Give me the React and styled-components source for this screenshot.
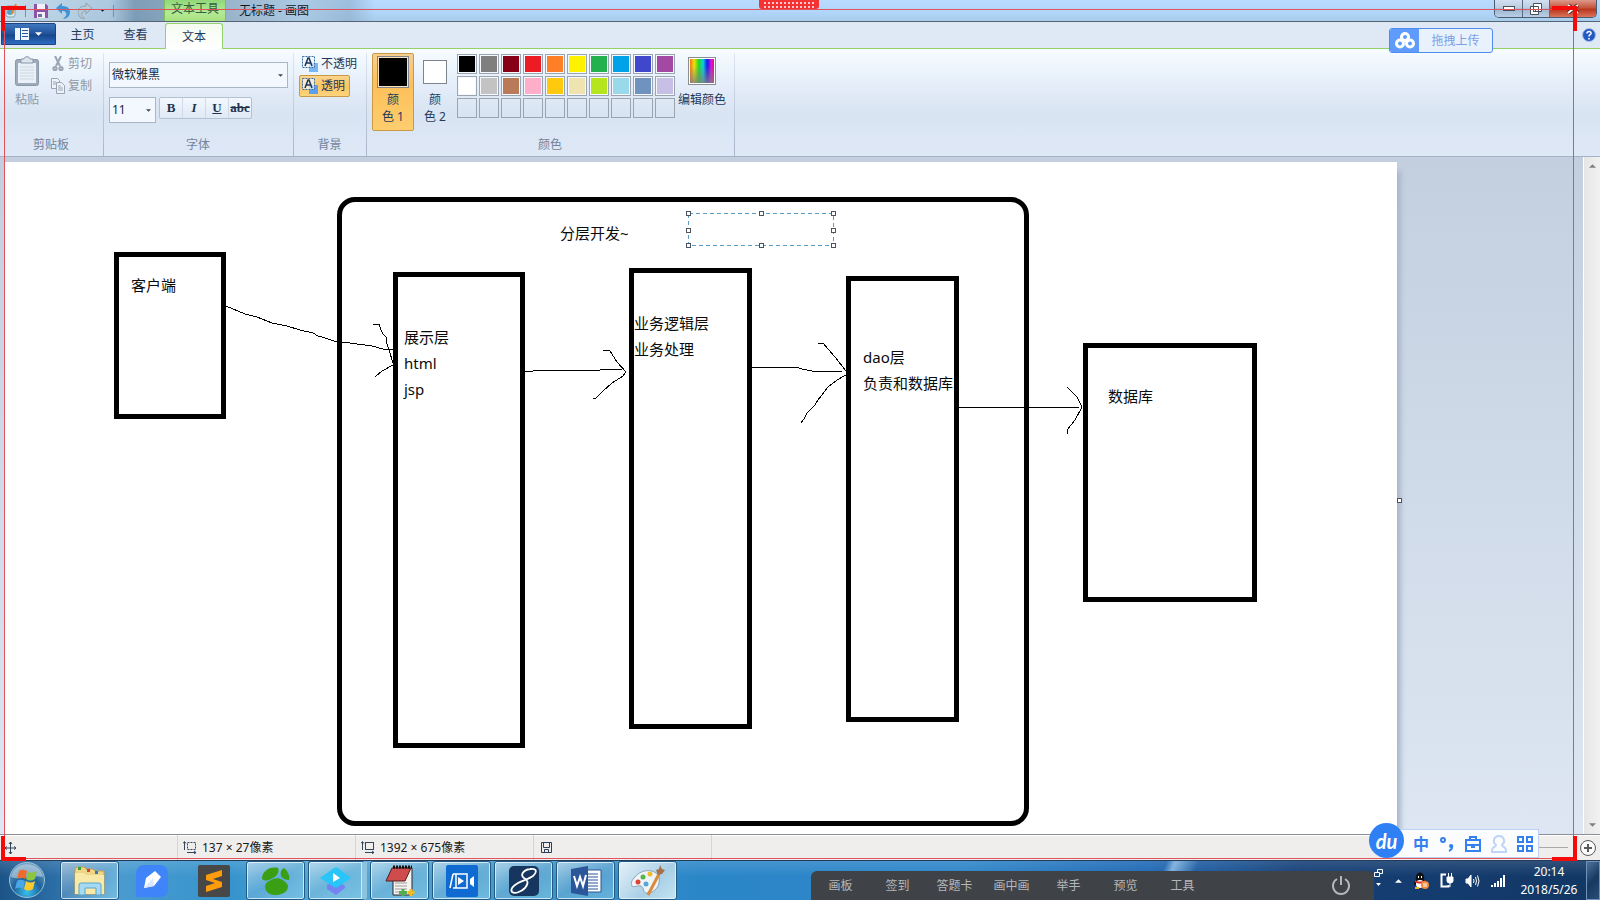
import React from "react";
import styled, { createGlobalStyle, css } from "styled-components";

const GlobalStyle = createGlobalStyle`
  * { box-sizing: border-box; }
  body {
    margin: 0;
    overflow: hidden;
    color: #1e395b;
    font: 12px/18px "Noto Sans", "Noto Sans CJK SC", sans-serif;
  }
  button, select, textarea, input { font: inherit; color: inherit; margin: 0; }
  button { padding: 0; border: 0; background: none; }
  svg { display: block; flex: none; }
`;

const Screen = styled.div`
  position: relative;
  display: flex;
  flex-direction: column;
  height: 100vh;
  overflow: hidden;
`;

/* ---------- title bar ---------- */

const TitleBar = styled.header`
  display: flex;
  flex: none;
  height: 22px;
  border-bottom: 1px solid #566476;
  background:
    linear-gradient(90deg, rgba(200, 220, 232, 0.9) 0, rgba(170, 196, 216, 0.8) 110px, rgba(112, 142, 166, 0.8) 135px, rgba(150, 175, 196, 0.9) 225px, rgba(170, 200, 225, 0.9) 300px, rgba(140, 172, 200, 0.6) 350px, transparent 375px),
    linear-gradient(#b9dbff, #b1d5fa 60%, #a8cde9);
`;

const QuickAccess = styled.div`
  display: flex;
  align-items: center;
  width: 164px;
  padding-left: 5px;
  gap: 8px;
`;

const QuickButton = styled.button`
  display: flex;
`;

const Separator = styled.span`
  width: 1px;
  height: 12px;
  background: #7c8ea3;
`;

const ContextTab = styled.div`
  width: 62px;
  border: solid #7cc05a;
  border-width: 0 1px;
  background: linear-gradient(#8fd877, #b5ea96 60%, #a5e07c);
  color: #35603c;
  text-align: center;
  white-space: nowrap;
`;

const Title = styled.h1`
  flex: 1;
  margin: 0;
  padding: 2px 0 0 13px;
  color: #10161e;
  font-size: 12px;
  font-weight: 400;
`;

const WindowButtons = styled.div`
  display: flex;
  height: 18px;
  margin-right: 3px;
  border: 1px solid #4c5b70;
  border-top: 0;
  border-radius: 0 0 5px 5px;
  overflow: hidden;
`;

const WindowButton = styled.button`
  display: flex;
  align-items: center;
  justify-content: center;
  width: ${(p) => (p.$close ? 47 : 27)}px;
  border-left: ${(p) => (p.$first ? 0 : 1)}px solid #5a6a80;
  background: ${(p) =>
    p.$close
      ? "linear-gradient(#dc9a8c, #c5553e 45%, #b83820 55%, #d9745a)"
      : "linear-gradient(#d2e0f0, #bccde2 45%, #9fb6d2 55%, #b9cee6)"};
`;

/* ---------- tabs ---------- */

const TabRow = styled.nav`
  display: flex;
  flex: none;
  align-items: flex-end;
  height: 27px;
  padding-left: 1px;
  border-bottom: 1px solid #92d269;
  background: #dfe9f5;
`;

const FileButton = styled.button`
  display: flex;
  align-items: center;
  align-self: flex-start;
  justify-content: center;
  gap: 6px;
  width: 55px;
  height: 22px;
  margin-top: 1px;
  border: 1px solid #1c4484;
  border-radius: 2px 2px 0 0;
  background: linear-gradient(#3f76be, #215299 50%, #174689 55%, #2c6ec4);
`;

const Tab = styled.button`
  width: ${(p) => (p.$active ? 58 : 53)}px;
  height: 26px;
  ${(p) =>
    p.$active &&
    css`
      margin: 0 0 -1px 3px;
      border: 1px solid #92d269;
      border-bottom: 0;
      border-radius: 3px 3px 0 0;
      background: linear-gradient(#f4fbef, #ffffff);
    `}
`;

const HelpButton = styled.button`
  align-self: center;
  margin: 0 4px 0 auto;
`;

const UploadButton = styled.button`
  position: absolute;
  z-index: 2;
  top: 28px;
  right: 107px;
  display: flex;
  width: 104px;
  height: 25px;
  border: 1px solid #4f8cf0;
  border-radius: 3px;
  overflow: hidden;
  background: #e9f1fd;
  color: #7ba0e4;
  line-height: 23px;
`;

const UploadIcon = styled.span`
  display: flex;
  align-items: center;
  justify-content: center;
  width: 29px;
  height: 23px;
  background: #5f9bfa;
`;

const UploadText = styled.span`
  flex: 1;
`;

/* ---------- ribbon ---------- */

const Ribbon = styled.section`
  display: flex;
  flex: none;
  height: 108px;
  padding-top: 4px;
  border-bottom: 1px solid #a5b2c5;
  background: linear-gradient(#f7fcff, #e6effa 30%, #d9e4f2 60%, #dee8f6);
`;

const Group = styled.div`
  display: flex;
  flex-direction: column;
  width: ${(p) => p.$width}px;
  padding-right: 1px;
  border-right: 1px solid #b0bccd;
  border-image: linear-gradient(#dde6f2, #a8b6ca) 1;
`;

const GroupBody = styled.div`
  display: flex;
  flex: 1;
  align-items: flex-start;
  padding-left: ${(p) => p.$pad || 0}px;
`;

const GroupLabel = styled.div`
  height: 20px;
  color: #73849c;
  text-align: center;
`;

const PasteButton = styled.button`
  display: flex;
  flex-direction: column;
  align-items: center;
  gap: 4px;
  width: 28px;
  padding-top: 3px;
  color: #8f98a5;
`;

const Stack = styled.div`
  display: flex;
  flex-direction: column;
  align-items: flex-start;
  padding-left: ${(p) => p.$pad || 0}px;
`;

const SmallButton = styled.button`
  display: flex;
  align-items: center;
  gap: 3px;
  height: 22px;
  padding: 0 4px 0 2px;
  border: 1px solid ${(p) => (p.$selected ? "#c89a45" : "transparent")};
  border-radius: 2px;
  background: ${(p) => (p.$selected ? "linear-gradient(#fbd58c, #fdc561 50%, #fdd47c)" : "none")};
  color: ${(p) => (p.$muted ? "#8f98a5" : "#1e395b")};
`;

const FontControls = styled.div`
  display: flex;
  flex-wrap: wrap;
  align-items: flex-start;
  gap: 9px 3px;
  padding-top: 9px;
`;

const SelectBox = styled.label`
  display: grid;
  align-items: center;
  width: ${(p) => p.$width}px;
  height: 26px;
  border: 1px solid #a9b6c7;
  background: #f3f8fe;

  select, svg { grid-area: 1 / 1; }
  select {
    width: 100%;
    height: 24px;
    padding: 0 2px;
    border: 0;
    appearance: none;
    background: none;
    color: #1a2838;
  }
  svg { justify-self: end; margin-right: 4px; pointer-events: none; }
`;

const StyleButtons = styled.div`
  display: flex;
  height: 22px;
  border: 1px solid #b3c1d4;
  border-radius: 2px;
  background: linear-gradient(#f3f8fd, #dfe9f5);
`;

const StyleButton = styled.button`
  width: ${(p) => (p.$first ? 22 : 23)}px;
  border-left: ${(p) => (p.$first ? 0 : 1)}px solid #cfdae8;
  color: #22324a;
  font: 700 13px/16px "Liberation Serif", serif;
  font-style: ${(p) => (p.$italic ? "italic" : "normal")};
  text-decoration: ${(p) => p.$line || "none"};
`;

const ColorSlot = styled.button`
  display: flex;
  flex-direction: column;
  align-items: center;
  width: 42px;
  height: 78px;
  padding-top: 1px;
  border: 1px solid ${(p) => (p.$selected ? "#c89a45" : "transparent")};
  border-radius: 2px;
  background: ${(p) => (p.$selected ? "linear-gradient(#f6cf90, #fdc05a 40%, #fdcd6e)" : "none")};
  line-height: 17px;
`;

const SlotWell = styled.span`
  display: flex;
  align-items: center;
  justify-content: center;
  height: 34px;
  margin-bottom: 2px;
`;

const SlotColor = styled.span`
  width: ${(p) => p.$size}px;
  height: ${(p) => p.$size}px;
  border: 1px solid #7d848e;
  outline: ${(p) => (p.$framed ? "1px solid #fbe2b8" : "0")};
  outline-offset: -2px;
  background: ${(p) => p.$color};
`;

const Palette = styled.div`
  display: grid;
  grid-template-columns: repeat(10, 20px);
  gap: 2px;
  margin: 1px 0 0 1px;
`;

const Swatch = styled.button`
  height: 20px;
  border: 1px solid #9ba5b2;
  background: ${(p) => p.$color || "transparent"};
  box-shadow: ${(p) => (p.$color ? "inset 0 0 0 1px #f5f8fc" : "none")};
`;

const EditColors = styled.button`
  display: flex;
  flex-direction: column;
  align-items: center;
  gap: 6px;
  width: 54px;
  padding-top: 4px;
  white-space: nowrap;
`;

const Spectrum = styled.span`
  width: 28px;
  height: 28px;
  border: 1px solid #8c8c94;
  box-shadow: inset 0 0 0 1px #ffffff;
  background:
    linear-gradient(transparent 30%, rgba(128, 128, 128, 0.85)),
    linear-gradient(90deg, #f06010, #f0e010 20%, #20d820 38%, #10d0e0 54%, #1818f0 70%, #e010d8 86%, #f01040);
`;

/* ---------- workspace and drawing ---------- */

const Workspace = styled.main`
  display: flex;
  flex: 1;
  min-height: 0;
  background: linear-gradient(#c3cfdf, #cfdae8 45%, #dde6f2);
`;

const Viewport = styled.div`
  flex: 1;
  min-width: 0;
  padding: 5px 0 0 5px;
  overflow: hidden;
`;

const Canvas = styled.div`
  position: relative;
  width: 1392px;
  height: 675px;
  background: #ffffff;
  box-shadow: 5px 8px 5px -1px #a9b8cc;
  color: #0a0a0a;
  font-size: 15px;
  line-height: 26px;
`;

const Shape = styled.div`
  position: absolute;
  left: ${(p) => p.$x}px;
  top: ${(p) => p.$y}px;
  width: ${(p) => p.$w}px;
  height: ${(p) => p.$h}px;
  padding: ${(p) => p.$pad || "0"};
  border: 5px solid #000000;
  border-radius: ${(p) => p.$round || 0}px;
  white-space: pre;
`;

const Caption = styled.div`
  position: absolute;
  left: 555px;
  top: 58px;
`;

const Strokes = styled.svg`
  position: absolute;
  inset: 0;
  width: 100%;
  height: 100%;
  fill: none;
  stroke: #000000;
  shape-rendering: crispEdges;
`;

const TextFrame = styled.div`
  position: absolute;
  left: 683px;
  top: 51px;
  display: grid;
  width: 146px;
  height: 33px;

  textarea, svg { grid-area: 1 / 1; }
  textarea {
    width: 100%;
    height: 100%;
    padding: 2px;
    border: 0;
    resize: none;
    background: none;
  }
  svg { pointer-events: none; shape-rendering: crispEdges; }
`;

const Handle = styled.span`
  position: absolute;
  left: ${(p) => p.$left};
  top: ${(p) => p.$top};
  width: 5px;
  height: 5px;
  margin: -2px;
  border: 1px solid #4a5560;
  background: #ffffff;
`;

const ScrollBar = styled.div`
  display: flex;
  flex-direction: column;
  align-items: center;
  justify-content: space-between;
  width: 17px;
  padding: 7px 0;
  border-left: 1px solid #ffffff;
  background: linear-gradient(90deg, #e6e6e6, #f1f1f1);
`;

/* ---------- status bar ---------- */

const StatusBar = styled.footer`
  display: flex;
  flex: none;
  height: 27px;
  border-top: 1px solid #8b8e94;
  border-bottom: 1px solid #243a58;
  background: #f0eeed;
  box-shadow: inset 0 1px #ffffff;
  color: #1a1a1a;
`;

const StatusCell = styled.div`
  display: flex;
  align-items: center;
  gap: 5px;
  width: 178px;
  padding-left: 5px;
  border-right: 1px solid #d6d5d5;
`;

const ZoomControls = styled.div`
  display: flex;
  align-items: center;
  gap: 12px;
  margin-left: auto;
  padding-right: 4px;

  input {
    width: 100px;
    height: 14px;
    appearance: none;
    background: linear-gradient(#a9a9ab, #a9a9ab) center / 100% 1px no-repeat;
  }
  input::-webkit-slider-thumb {
    appearance: none;
    width: 9px;
    height: 13px;
    border: 1px solid #777777;
    background: #eeeeee;
  }
`;

/* ---------- input method bar ---------- */

const ImeBar = styled.div`
  position: absolute;
  z-index: 3;
  right: 61px;
  bottom: 42px;
  display: flex;
  align-items: center;
  height: 29px;
  border: 1px solid #bdd2f2;
  background: #fbfcfe;
`;

const ImeLogo = styled.button`
  width: 35px;
  height: 35px;
  margin: -6px 4px 0 -23px;
  border-radius: 50%;
  background: #2f80f5;
  color: #ffffff;
  font: italic 700 20px/32px Lato, sans-serif;
`;

const ImeButton = styled.button`
  display: flex;
  align-items: center;
  justify-content: center;
  width: 26px;
  height: 27px;
  color: #3380ee;
  font-size: 16px;
  font-weight: 700;
`;

/* ---------- taskbar ---------- */

const TaskBar = styled.div`
  display: flex;
  flex: none;
  height: 39px;
  background:
    linear-gradient(112deg, transparent 1082px, rgba(190, 225, 255, 0.6) 1090px, transparent 1112px) 0 0 / 100% 12px no-repeat,
    linear-gradient(rgba(255, 255, 255, 0.12), transparent 40%),
    linear-gradient(90deg, #1d5488 0, #2b6ea6 55px, #4a9bcf 115px, #3693cd 230px, #55a9d5 330px, #3c93c8 560px, #2b86c8 700px, #2d85c8 960px, #1d67b4 1150px, #153f76 1300px, #123764 100%);
`;

const StartButton = styled.button`
  width: 60px;
  padding-left: 9px;
`;

const TaskButton = styled.button`
  display: flex;
  align-items: center;
  justify-content: center;
  width: 59px;
  height: 39px;
  margin-right: 3px;
  border-radius: 3px;
  ${(p) =>
    p.$open &&
    css`
      border: 1px solid #235a84;
      box-shadow: inset 0 0 0 1px rgba(235, 248, 255, 0.75);
      background: ${p.$active
        ? "linear-gradient(135deg, #e6f1f8, #a9cfe6 60%, #c4e4f2)"
        : "linear-gradient(150deg, rgba(255, 255, 255, 0.5), rgba(255, 255, 255, 0.15) 50%, rgba(190, 245, 255, 0.35))"};
    `}
  ${(p) =>
    p.$stacked &&
    css`
      border-right-width: 5px;
      border-right-color: #8cc4e0;
    `}
`;

const ClassPanel = styled.div`
  display: flex;
  flex: 1;
  align-self: flex-end;
  align-items: center;
  height: 29px;
  margin-left: 131px;
  padding: 0 24px 0 1px;
  border-radius: 6px 6px 0 0;
  background: #3f4246;
  color: #b4b8bc;
`;

const ClassButton = styled.button`
  width: 57px;
`;

const PowerButton = styled.button`
  margin-left: auto;
`;

const Tray = styled.div`
  display: flex;
  align-items: flex-start;
  width: 226px;
`;

const TrayIcons = styled.div`
  display: flex;
  align-items: center;
  gap: 11px;
  height: 39px;
`;

const Clock = styled.time`
  flex: 1;
  padding: 2px 0 0 6px;
  color: #ffffff;
  text-align: center;
  white-space: pre;
`;

const ShowDesktop = styled.button`
  width: 14px;
  height: 39px;
  border: 1px solid #6f93b8;
  background: linear-gradient(135deg, #4c739c, #17385f 50%, #274d78);
`;

/* ---------- recording frame ---------- */

const CaptureFrame = styled.div`
  position: absolute;
  z-index: 5;
  top: 6px;
  right: 23px;
  bottom: 39px;
  left: 1px;
  pointer-events: none;
`;

const CaptureLine = styled.div`
  position: absolute;
  inset: 3px 3px 2px;
  border: 1px solid #e2525a;
`;

const Corner = styled.span`
  position: absolute;
  ${(p) => p.$v}: 0;
  ${(p) => p.$h}: 0;
  width: 25px;
  height: 25px;
  border: 0 solid #f50a0a;
  border-${(p) => p.$v}-width: 4px;
  border-${(p) => p.$h}-width: 4px;
`;

const CaptureGrip = styled.span`
  position: absolute;
  top: -6px;
  left: 50%;
  width: 60px;
  height: 9px;
  margin-left: -30px;
  border: solid #f53232;
  border-width: 1px 3px;
  border-radius: 0 0 3px 3px;
  background:
    linear-gradient(90deg, #f53232 2px, transparent 2px) 0 0 / 4px 100%,
    linear-gradient(#f53232 1px, #ffc6cc 1px, #ffc6cc 3px, #f53232 3px) 0 0 / 100% 4px;
`;

/* ---------- drawings ---------- */

const Triangle = ({ size = 5, color = "#3c4654", up }) => (
  <svg width={size * 2 - 3} height={size - 1} viewBox="0 0 8 4">
    <path d={up ? "M0 4h8L4 0z" : "M0 0h8L4 4z"} fill={color} />
  </svg>
);

const PaintLogo = () => (
  <svg width="12" height="16" viewBox="0 0 12 16">
    <rect x="1" y="3" width="9" height="11" rx="2" fill="#dce9ee" stroke="#84a6b4" />
    <circle cx="5" cy="9" r="3" fill="#54a0c8" />
    <path d="M11 1L7 11" stroke="#d98b2c" strokeWidth="2" />
  </svg>
);

const SaveIcon = () => (
  <svg width="14" height="14" viewBox="0 0 14 14">
    <path d="M0 0h12l2 2v12H0z" fill="#8c54a4" />
    <path d="M3 0h8v5H3zM3 8h8v6H3z" fill="#f4eef8" />
    <path d="M4 10h4v3H4z" fill="#6d6e9b" />
  </svg>
);

const UndoIcon = () => (
  <svg width="14" height="16" viewBox="0 0 14 16">
    <path d="M0 5l6-5v3c6 0 8 3 8 6 0 4-3 7-7 7 3-3 4-4 3-6-1-2-2-2-4-2v3z" fill="#3d94d6" />
  </svg>
);

const RedoIcon = () => (
  <svg width="14" height="16" viewBox="0 0 14 16">
    <path d="M14 5L8 0v3C2 3 0 6 0 9c0 4 3 7 7 7-3-3-4-4-3-6 1-2 2-2 4-2v3z" fill="#b9c9d6" stroke="#8fa3b4" />
  </svg>
);

const MenuPageIcon = () => (
  <svg width="14" height="12" viewBox="0 0 14 12">
    <path d="M0 0h14v12H0z" fill="#eef5fc" />
    <path d="M5.500 0v12M7 2.500h6M7 5.500h6M7 8.500h6" stroke="#27579c" />
  </svg>
);

const PasteIcon = () => (
  <svg width="26" height="31" viewBox="0 0 26 31">
    <rect x="1.500" y="3.500" width="23" height="26" rx="2" fill="#9eabba" stroke="#8997a8" />
    <path d="M4 7h18v20H4z" fill="#eaf0f7" />
    <path d="M6 11h14M6 14h14M6 17h14M6 20h14M6 23h14" stroke="#ccd6e2" />
    <path d="M7 7V3h3c0-3 6-3 6 0h3v4z" fill="#dce4ed" stroke="#8997a8" />
  </svg>
);

const CutIcon = () => (
  <svg width="14" height="16" viewBox="0 0 14 16" fill="none" stroke="#9aa5b3" strokeWidth="2">
    <path d="M4 0l5 10M10 0L5 10" />
    <circle cx="4" cy="12.500" r="1.600" />
    <circle cx="10" cy="12.500" r="1.600" />
  </svg>
);

const CopyIcon = () => (
  <svg width="14" height="16" viewBox="0 0 14 16" fill="#eef3f9" stroke="#9aa5b3">
    <path d="M.5.500h6l2 2v8h-8z" />
    <path d="M5.500 4.500h5l3 3v8h-8z" />
    <path d="M2 4h3M2 6h3M7 8h3M7 10h5M7 12h5" />
  </svg>
);

const TextBgIcon = ({ solid }) => (
  <svg width="16" height="16" viewBox="0 0 16 16">
    <path d="M7 7h9v9H7z" fill={solid ? "#5b9ff0" : "#79b6f4"} />
    <rect x=".5" y=".5" width="12" height="11" fill="#eff6fd" fillOpacity=".7" stroke="#3a6ea0" strokeDasharray="2 1" />
    <path d="M3 10l3-8h1l3 8M4 7h5" fill="none" stroke="#1d3557" strokeWidth="1.500" />
  </svg>
);

const CloudIcon = () => (
  <svg width="20" height="17" viewBox="0 0 20 17" fill="none" stroke="#ffffff" strokeWidth="3">
    <circle cx="10" cy="5" r="3.500" />
    <circle cx="5" cy="11.500" r="3.500" />
    <circle cx="15" cy="11.500" r="3.500" />
  </svg>
);

const HelpIcon = () => (
  <svg width="14" height="14" viewBox="0 0 14 14">
    <circle cx="7" cy="7" r="6.500" fill="#2459c4" stroke="#a8bfe6" />
    <path d="M5 5.500c0-3 4.500-2.500 4 0C8.700 6.800 7 6.800 7 8.500M7 10v1.500" fill="none" stroke="#fff" strokeWidth="1.600" />
  </svg>
);

const MoveIcon = () => (
  <svg width="11" height="12" viewBox="0 0 11 12" fill="none" stroke="#34465c">
    <path d="M5.500 0v12M0 6h11M4 2l1.500-2L7 2M4 10l1.500 2L7 10M2 4.500L0 6l2 1.500M9 4.500L11 6 9 7.500" />
  </svg>
);

const SizeIcon = ({ dashed }) => (
  <svg width="14" height="13" viewBox="0 0 14 13" fill="none" stroke="#34465c">
    <rect x="4.500" y="1.500" width="8" height="7" strokeDasharray={dashed ? "2 1" : undefined} />
    <path d="M1.500 1v8M0 2.500l1.500-2 1.500 2M4 11.500h9M11 10l2 1.500-2 1.500" />
  </svg>
);

const DiskIcon = () => (
  <svg width="14" height="11" viewBox="-2 0 14 11" fill="none" stroke="#2b3f5a">
    <path d="M.5.500h10v10H.5zM2.500.500v5h6v-5M3.500 10.500v-3h4v3" />
  </svg>
);

const PlusIcon = () => (
  <svg width="16" height="16" viewBox="0 0 16 16" fill="none" stroke="#5a5a5a">
    <circle cx="8" cy="8" r="7.500" fill="#fafafa" />
    <path d="M8 4v8M4 8h8" strokeWidth="2" />
  </svg>
);

const StartOrb = () => (
  <svg width="37" height="37" viewBox="0 0 37 37">
    <defs>
      <radialGradient id="orb" cx=".5" cy=".85" r=".8">
        <stop offset="0" stopColor="#39c0ee" />
        <stop offset=".5" stopColor="#1d6299" />
        <stop offset="1" stopColor="#6f9fc2" />
      </radialGradient>
    </defs>
    <circle cx="18" cy="18" r="17.500" fill="url(#orb)" stroke="#9cc3dc" />
    <path d="M2 15C5-2 31-2 34 15c-10-3-22 4-32 0z" fill="#d6e6f0" opacity=".5" />
    <path d="M10 9c3-2 5-1 8 0l-2 8c-3-1-5-2-8 0z" fill="#ef6a2b" />
    <path d="M19 10c3 1 5 1 9-1l-2 8c-3 2-6 2-9 0z" fill="#8cc63e" />
    <path d="M8 19c3-2 5-1 8 0l-2 8c-3-1-5-2-8 0z" fill="#4aa8e8" />
    <path d="M17 19c3 2 6 2 9 0l-2 8c-3 2-6 2-9 0z" fill="#fbc92d" />
  </svg>
);

const FolderIcon = () => (
  <svg width="32" height="30" viewBox="0 0 32 30">
    <path d="M1 3l2-2h7l2 2h7l2 2h9v23H1z" fill="#efd584" stroke="#c5a04c" />
    <path d="M4 1h3v3H4z" fill="#3a9c3c" />
    <path d="M13 3h3v3h-3z" fill="#cf4530" />
    <path d="M21 5h3v3h-3z" fill="#3578c2" />
    <path d="M1 7h9l2 2h18v19H1z" fill="#f9e9a9" />
    <path d="M5 29V19q0-2 2-2h18q2 0 2 2v10h-5v-7H11v7z" fill="#a5daf2" stroke="#5ba3cd" />
  </svg>
);

const FeatherIcon = () => (
  <svg width="32" height="32" viewBox="0 0 32 32">
    <path d="M9 0h14q9 0 9 9v14q0 9-9 9H0V9q0-9 9-9z" fill="#3f84f8" />
    <path d="M8 23l2-10 9-7 6 6-7 9z" fill="#ffffff" />
    <path d="M8 23l9-10 1 8z" fill="#dbe8ff" />
  </svg>
);

const SublimeIcon = () => (
  <svg width="32" height="32" viewBox="0 0 32 32">
    <rect width="32" height="32" rx="2" fill="#474747" />
    <path d="M8 10l16-5v6l-9 3 9 3v5L8 27v-6l9-3-9-3z" fill="#ff9c0e" />
  </svg>
);

const PawIcon = () => (
  <svg width="30" height="28" viewBox="0 0 30 28" fill="#3a9f12">
    <path d="M1 12C1 4 9-1 17 1c2 3-1 8-5 10-4 2-7 4-11 1z" />
    <path d="M20 9c-1-4 0-6 3-8 4 3 6 8 5 12-3 0-6-1-8-4z" />
    <path d="M4 19c1-4 4-5 8-7 5-2 9 0 11 2 4 3 5 5 3 9-3 5-13 6-17 4-4-2-5-5-5-8z" />
  </svg>
);

const PlayStackIcon = () => (
  <svg width="32" height="28" viewBox="0 0 32 28">
    <path d="M7 18l9-5 9 6v2l-9 7-9-6z" fill="#7582f2" />
    <path d="M0 11L14 1q2-1 4 0l13 10-13 9q-2 1-4 0z" fill="#29c5f8" />
    <path d="M13 6v9l7-4z" fill="#ffffff" />
  </svg>
);

const NotepadIcon = () => (
  <svg width="30" height="32" viewBox="0 0 30 32">
    <path d="M8 3h19v27H8z" fill="#f6f2f0" stroke="#2d2523" />
    <path d="M10 18h12M10 21h12M10 24h12M10 27h12" stroke="#9f9c9d" />
    <path d="M7 3h19l-6 13H1z" fill="#cf4c4c" stroke="#551d1b" />
    <path d="M8 2h19" stroke="#111" strokeWidth="3" strokeDasharray="2 1" />
    <path d="M18 24v7M14 27.500h8" stroke="#4fae4f" strokeWidth="3" />
    <path d="M26 24v7M22.500 27.500h7" stroke="#f2bd1d" strokeWidth="3" />
  </svg>
);

const CameraIcon = () => (
  <svg width="32" height="32" viewBox="0 0 32 32" fill="none" stroke="#ffffff" strokeWidth="2">
    <rect width="32" height="32" rx="2" fill="#0f6ad2" stroke="none" />
    <path d="M7 9h14v14H7M7 9L4 23M10 9v14" strokeWidth="1.500" />
    <path d="M12 12v8l6-4zM24 14l4-3v11l-4-3z" fill="#ffffff" stroke="none" />
  </svg>
);

const EightIcon = () => (
  <svg width="30" height="30" viewBox="0 0 30 30" fill="none" stroke="#ffffff">
    <rect width="30" height="30" rx="5" fill="#17365f" stroke="none" />
    <path d="M24 10c5-5 3-8-3-7-7 1-10 6-6 9 4 2 5 5 1 10-4 4-10 6-13 4-2-3 1-6 6-9 6-3 11-4 15-7z" strokeWidth="1.800" />
  </svg>
);

const WordIcon = () => (
  <svg width="32" height="30" viewBox="0 0 32 30">
    <path d="M17 4h14v22H17z" fill="#ffffff" stroke="#2b579a" />
    <path d="M18 8h10M18 11h10M18 14h10M18 17h10M18 20h10M18 23h10" stroke="#2b579a" />
    <path d="M1 3l17-3v30L1 27z" fill="#2b579a" />
    <path d="M4 10l3 10 3-9 3 9 3-11" fill="none" stroke="#ffffff" strokeWidth="2" />
  </svg>
);

const PaletteIcon = () => (
  <svg width="34" height="32" viewBox="0 0 34 32">
    <path d="M4 12C11 3 25 4 28 12c2 8-4 16-12 16-5 0-2-5-6-7-4-1-7 2-9 0s0-6 3-9z" fill="#eef4f8" stroke="#89a3b8" />
    <circle cx="7" cy="17" r="2.500" fill="#dd4433" />
    <circle cx="12" cy="12" r="2.500" fill="#58b348" />
    <circle cx="19" cy="9" r="2.500" fill="#f0ba2c" />
    <circle cx="15" cy="19" r="2.500" fill="#58a6d6" />
    <path d="M28 9L17 30" stroke="#d98b3c" strokeWidth="3" />
    <path d="M25 5l3-1 1-4 2 4 3 1-3 4-4 1z" fill="#a6714a" />
  </svg>
);

const PowerIcon = () => (
  <svg width="18" height="19" viewBox="0 0 18 19" fill="none" stroke="#b4b8bc" strokeWidth="2">
    <path d="M5 3a8 8 0 1 0 8 0M9 0v9" />
  </svg>
);

const RestoreIcon = () => (
  <svg width="10" height="24" viewBox="0 0 10 24" fill="none" stroke="#ffffff">
    <path d="M.5 3.500h5v4h-5zM3.500 3V.5h5v4H6" />
    <path d="M2 14h5l-2.500 3z" fill="#ffffff" stroke="none" />
  </svg>
);

const PenguinIcon = () => (
  <svg width="16" height="17" viewBox="0 0 16 17">
    <path d="M1 13c0-4 2-4 2-8 0-6 8-6 8 0 0 4 2 4 2 8z" fill="#111111" />
    <ellipse cx="7" cy="12" rx="4" ry="4" fill="#ffffff" />
    <path d="M5 4h1v2H5zM8 4h1v2H8z" fill="#ffffff" />
    <path d="M2 8c3 2 7 2 10 0v2c-3 2-7 2-10 0z" fill="#e02a20" />
    <path d="M2 15h4v2H2z" fill="#f0b020" />
    <circle cx="12" cy="13" r="4" fill="#f08a38" />
    <path d="M10 12h4M10 14h4" stroke="#ffffff" />
  </svg>
);

const BatteryIcon = () => (
  <svg width="14" height="15" viewBox="0 0 14 15" fill="none" stroke="#ffffff">
    <path d="M6 1.500H1.500v12h7V12" strokeWidth="2" />
    <path d="M7 4v4q0 2 3 2t3-2V4zM8.500 0v4M11.500 0v4M10 10v4" fill="#ffffff" />
  </svg>
);

const SoundIcon = () => (
  <svg width="15" height="14" viewBox="0 0 15 14" fill="none" stroke="#ffffff">
    <path d="M1 5h2l3-4v12L3 9H1z" fill="#ffffff" />
    <path d="M8.500 5q1 2 0 4M10.500 3q2 4 0 8M12.500 1.500q3 5.500 0 11" />
  </svg>
);

const SignalIcon = () => (
  <svg width="15" height="12" viewBox="0 0 15 12" fill="#ffffff">
    <path d="M0 10h2v2H0zM3 8h2v4H3zM6 6h2v6H6zM9 3h2v9H9zM12 0h2v12h-2z" />
  </svg>
);

const PunctuationIcon = () => (
  <svg width="16" height="16" viewBox="0 0 16 16" fill="none" stroke="#3380ee" strokeWidth="2">
    <circle cx="4" cy="4" r="2" />
    <path d="M13 9q1 4-3 6" strokeWidth="2" />
    <circle cx="12" cy="10" r="1" />
  </svg>
);

const ToolboxIcon = () => (
  <svg width="16" height="16" viewBox="0 0 16 16" fill="none" stroke="#3380ee" strokeWidth="2">
    <path d="M1 4h14v11H1zM5 4V1h6v3M1 9h14M6 11h4" />
  </svg>
);

const PersonIcon = () => (
  <svg width="16" height="18" viewBox="0 0 16 18" fill="none" stroke="#bfd4f6" strokeWidth="2">
    <path d="M5 10C1 7 3 1 8 1s7 6 3 9c0 2 4 2 4 5v2H1v-2c0-3 4-3 4-5z" />
  </svg>
);

const GridIcon = () => (
  <svg width="16" height="16" viewBox="0 0 16 16" fill="none" stroke="#3380ee" strokeWidth="2">
    <path d="M1 1h5v5H1zM10 1h5v5h-5zM1 10h5v5H1zM10 10h5v5h-5z" />
  </svg>
);

/* ---------- data ---------- */

const PALETTE = [
  ["黑色", "#000000"], ["灰色-50%", "#7f7f7f"], ["深红色", "#880015"], ["红色", "#ed1c24"], ["橙色", "#ff7f27"],
  ["黄色", "#fff200"], ["绿色", "#22b14c"], ["青绿", "#00a2e8"], ["靛青", "#3f48cc"], ["紫色", "#a349a4"],
  ["白色", "#ffffff"], ["灰色-25%", "#c3c3c3"], ["褐色", "#b97a57"], ["玫瑰色", "#ffaec9"], ["金色", "#ffc90e"],
  ["浅黄色", "#efe4b0"], ["酸橙色", "#b5e61d"], ["淡青绿色", "#99d9ea"], ["蓝灰色", "#7092be"], ["淡紫色", "#c8bfe7"],
  ...Array.from({ length: 10 }, (_, i) => [`自定义 ${i + 1}`, null]),
];

const STROKES = [
  "221,144 228,147 240,152 252,155 267,161 282,164 295,168 308,171 313,174 317,175 332,180 345,181 352,182 367,184 378,187 388,187",
  "368,162 374,162 376,168 378,172 381,175 382,182 384,188 388,201",
  "388,203 377,209 370,215",
  "520,210 537,208 595,208 617,207",
  "598,188 605,189 612,200 621,210 618,214 607,221 598,229 591,236 588,237",
  "747,205 791,205 797,207 807,209 837,209",
  "813,181 818,181 830,195 841,209",
  "841,213 832,218 823,225 813,238 810,243 802,251 799,257 796,261",
  "954,245 1074,245",
  "1062,225 1072,235 1076,243 1076,247 1070,258 1062,268 1062,272",
];

const HANDLES = [
  ["0px", "0px"], ["50%", "0px"], ["145px", "0px"], ["0px", "50%"],
  ["145px", "50%"], ["0px", "32px"], ["50%", "32px"], ["145px", "32px"],
];

const TASKS = [
  { name: "资源管理器", icon: FolderIcon, open: true },
  { name: "便笺", icon: FeatherIcon },
  { name: "Sublime Text", icon: SublimeIcon },
  { name: "Axure", icon: PawIcon, open: true },
  { name: "播放器", icon: PlayStackIcon, open: true, stacked: true },
  { name: "记事本", icon: NotepadIcon, open: true },
  { name: "录屏", icon: CameraIcon, open: true },
  { name: "数据库工具", icon: EightIcon, open: true },
  { name: "Word", icon: WordIcon, open: true },
  { name: "画图", icon: PaletteIcon, open: true, active: true },
];

const CLASS_TOOLS = ["画板", "签到", "答题卡", "画中画", "举手", "预览", "工具"];

export default function App() {
  return (
    <Screen>
      <GlobalStyle />

      <TitleBar>
        <QuickAccess>
          <PaintLogo />
          <Separator />
          <QuickButton aria-label="保存"><SaveIcon /></QuickButton>
          <QuickButton aria-label="撤消"><UndoIcon /></QuickButton>
          <QuickButton aria-label="重做"><RedoIcon /></QuickButton>
          <QuickButton aria-label="自定义快速访问工具栏"><Triangle size={4} color="#111820" /></QuickButton>
          <Separator />
        </QuickAccess>
        <ContextTab>文本工具</ContextTab>
        <Title>无标题 - 画图</Title>
        <WindowButtons>
          <WindowButton $first aria-label="最小化">
            <svg width="12" height="5" viewBox="0 0 12 5"><rect x=".5" y=".5" width="11" height="4" fill="#fff" stroke="#48505c" /></svg>
          </WindowButton>
          <WindowButton aria-label="还原">
            <svg width="12" height="12" viewBox="0 0 12 12" fill="#fff" stroke="#48505c"><path d="M3.500.500h8v8h-8zM.5 3.500h8v8h-8zM3.500 6.500h2v2h-2z" /></svg>
          </WindowButton>
          <WindowButton $close aria-label="关闭">
            <svg width="12" height="10" viewBox="0 0 12 10"><path d="M1 1l10 8M11 1L1 9" stroke="#5b2b26" strokeWidth="4" /><path d="M1 1l10 8M11 1L1 9" stroke="#fff" strokeWidth="2" /></svg>
          </WindowButton>
        </WindowButtons>
      </TitleBar>

      <TabRow>
        <FileButton aria-label="文件">
          <MenuPageIcon />
          <Triangle color="#ffffff" />
        </FileButton>
        <Tab>主页</Tab>
        <Tab>查看</Tab>
        <Tab $active>文本</Tab>
        <HelpButton aria-label="帮助"><HelpIcon /></HelpButton>
      </TabRow>
      <UploadButton>
        <UploadIcon><CloudIcon /></UploadIcon>
        <UploadText>拖拽上传</UploadText>
      </UploadButton>

      <Ribbon>
        <Group $width={104}>
          <GroupBody $pad={13}>
            <PasteButton><PasteIcon />粘贴</PasteButton>
            <Stack $pad={7}>
              <SmallButton $muted><CutIcon />剪切</SmallButton>
              <SmallButton $muted><CopyIcon />复制</SmallButton>
            </Stack>
          </GroupBody>
          <GroupLabel>剪贴板</GroupLabel>
        </Group>

        <Group $width={190}>
          <GroupBody $pad={5}>
            <FontControls>
              <SelectBox $width={179}>
                <select aria-label="字体系列" defaultValue="微软雅黑"><option>微软雅黑</option></select>
                <Triangle size={4} />
              </SelectBox>
              <SelectBox $width={47}>
                <select aria-label="字体大小" defaultValue="11"><option>11</option></select>
                <Triangle size={4} />
              </SelectBox>
              <StyleButtons>
                <StyleButton $first aria-label="粗体">B</StyleButton>
                <StyleButton $italic aria-label="斜体">I</StyleButton>
                <StyleButton $line="underline" aria-label="下划线">U</StyleButton>
                <StyleButton $line="line-through" aria-label="删除线">abc</StyleButton>
              </StyleButtons>
            </FontControls>
          </GroupBody>
          <GroupLabel>字体</GroupLabel>
        </Group>

        <Group $width={73}>
          <GroupBody $pad={5}>
            <Stack>
              <SmallButton><TextBgIcon />不透明</SmallButton>
              <SmallButton $selected><TextBgIcon solid />透明</SmallButton>
            </Stack>
          </GroupBody>
          <GroupLabel>背景</GroupLabel>
        </Group>

        <Group $width={368}>
          <GroupBody $pad={5}>
            <ColorSlot $selected>
              <SlotWell><SlotColor $size={32} $color="#000000" $framed /></SlotWell>
              <span>颜</span>
              <span>色 1</span>
            </ColorSlot>
            <ColorSlot>
              <SlotWell><SlotColor $size={24} $color="#ffffff" /></SlotWell>
              <span>颜</span>
              <span>色 2</span>
            </ColorSlot>
            <Palette>
              {PALETTE.map(([name, color]) => (
                <Swatch key={name} aria-label={name} $color={color} />
              ))}
            </Palette>
            <EditColors><Spectrum />编辑颜色</EditColors>
          </GroupBody>
          <GroupLabel>颜色</GroupLabel>
        </Group>
      </Ribbon>

      <Workspace>
        <Viewport>
          <Canvas>
            <Shape $x={332} $y={35} $w={692} $h={629} $round={18} />
            <Shape $x={109} $y={90} $w={112} $h={167} $pad="15px 12px">客户端</Shape>
            <Shape $x={388} $y={110} $w={132} $h={476} $pad="47px 6px">{"展示层\nhtml\njsp"}</Shape>
            <Shape $x={624} $y={106} $w={123} $h={461} $pad="37px 0">{"业务逻辑层\n业务处理"}</Shape>
            <Shape $x={841} $y={114} $w={113} $h={446} $pad="63px 12px">{"dao层\n负责和数据库"}</Shape>
            <Shape $x={1078} $y={181} $w={174} $h={259} $pad="35px 20px">数据库</Shape>
            <Strokes viewBox="0 0 1392 675">
              {STROKES.map((points) => <polyline key={points} points={points} />)}
            </Strokes>
            <Caption>分层开发~</Caption>
            <TextFrame>
              <textarea aria-label="文本框" />
              <svg width="146" height="33" viewBox="0 0 146 33">
                <rect x=".5" y=".5" width="145" height="32" fill="none" stroke="#5c9cc9" strokeDasharray="4 3" />
              </svg>
              {HANDLES.map(([left, top]) => <Handle key={left + top} $left={left} $top={top} />)}
            </TextFrame>
            <Handle $left="1394px" $top="50%" />
          </Canvas>
        </Viewport>
        <ScrollBar>
          <Triangle up color="#808080" />
          <Triangle color="#808080" />
        </ScrollBar>
      </Workspace>

      <StatusBar>
        <StatusCell><MoveIcon /></StatusCell>
        <StatusCell><SizeIcon dashed />137 × 27像素</StatusCell>
        <StatusCell><SizeIcon />1392 × 675像素</StatusCell>
        <StatusCell><DiskIcon /></StatusCell>
        <ZoomControls>
          <input type="range" aria-label="缩放" defaultValue="0" />
          <button aria-label="放大"><PlusIcon /></button>
        </ZoomControls>
      </StatusBar>

      <TaskBar>
        <StartButton aria-label="开始"><StartOrb /></StartButton>
        {TASKS.map(({ name, icon: Icon, open, active, stacked }) => (
          <TaskButton key={name} aria-label={name} $open={open} $active={active} $stacked={stacked}>
            <Icon />
          </TaskButton>
        ))}
        <ClassPanel>
          {CLASS_TOOLS.map((tool) => <ClassButton key={tool}>{tool}</ClassButton>)}
          <PowerButton aria-label="退出"><PowerIcon /></PowerButton>
        </ClassPanel>
        <Tray>
          <TrayIcons>
            <RestoreIcon />
            <Triangle up color="#ffffff" />
            <PenguinIcon />
            <BatteryIcon />
            <SoundIcon />
            <SignalIcon />
          </TrayIcons>
          <Clock>{"20:14\n2018/5/26"}</Clock>
          <ShowDesktop aria-label="显示桌面" />
        </Tray>
      </TaskBar>

      <ImeBar>
        <ImeLogo>du</ImeLogo>
        <ImeButton>中</ImeButton>
        <ImeButton aria-label="标点"><PunctuationIcon /></ImeButton>
        <ImeButton aria-label="工具箱"><ToolboxIcon /></ImeButton>
        <ImeButton aria-label="账户"><PersonIcon /></ImeButton>
        <ImeButton aria-label="面板"><GridIcon /></ImeButton>
      </ImeBar>

      <CaptureFrame>
        <CaptureLine />
        <Corner $v="top" $h="left" />
        <Corner $v="top" $h="right" />
        <Corner $v="bottom" $h="left" />
        <Corner $v="bottom" $h="right" />
        <CaptureGrip />
      </CaptureFrame>
    </Screen>
  );
}
